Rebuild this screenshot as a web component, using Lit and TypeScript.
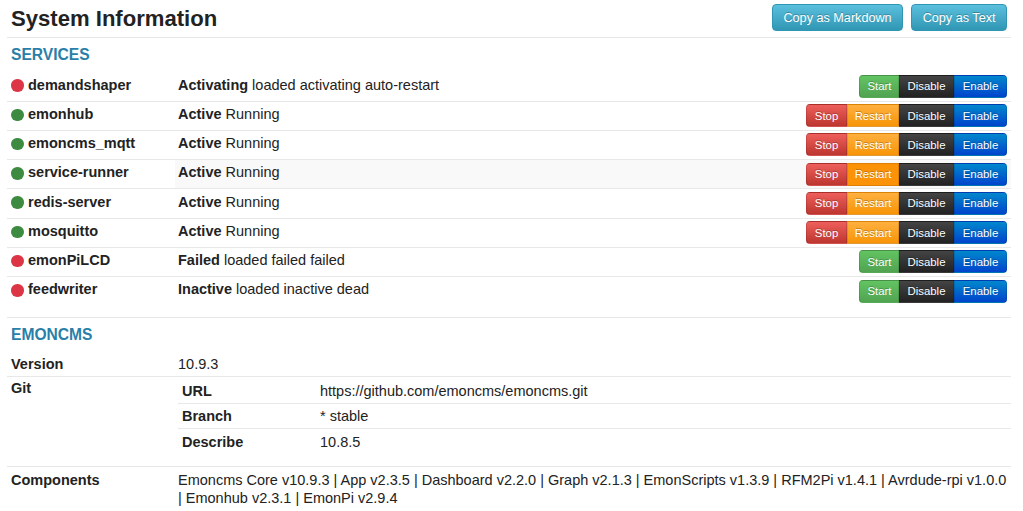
import { LitElement, html, css } from "lit";
import { customElement } from "lit/decorators.js";

type Svc = { name: string; ok: boolean; state: string; detail: string; hover?: boolean };

const services: Svc[] = [
  { name: "demandshaper", ok: false, state: "Activating", detail: "loaded activating auto-restart" },
  { name: "emonhub", ok: true, state: "Active", detail: "Running" },
  { name: "emoncms_mqtt", ok: true, state: "Active", detail: "Running" },
  { name: "service-runner", ok: true, state: "Active", detail: "Running", hover: true },
  { name: "redis-server", ok: true, state: "Active", detail: "Running" },
  { name: "mosquitto", ok: true, state: "Active", detail: "Running" },
  { name: "emonPiLCD", ok: false, state: "Failed", detail: "loaded failed failed" },
  { name: "feedwriter", ok: false, state: "Inactive", detail: "loaded inactive dead" },
];

@customElement("app-root")
export class AppRoot extends LitElement {
  static styles = css`
    :host {
      display: block;
      width: 1023px;
      height: 511px;
      overflow: hidden;
      background: #fff;
      color: #222;
      font-family: "Liberation Sans", Arial, sans-serif;
      font-size: 14.5px;
      box-sizing: border-box;
      padding: 0 12px 0 7px;
    }
    .head {
      display: flex;
      justify-content: space-between;
      height: 33px;
      border-bottom: 1px solid #e8e8e8;
      padding: 4px 4px 0 4px;
    }
    h1 {
      margin: 0;
      font-size: 22.1px;
      line-height: 30px;
      font-weight: bold;
      color: #222;
    }
    .copy {
      display: flex;
      gap: 8px;
      align-self: flex-start;
    }
    .copy button {
      height: 27px;
      padding: 0 10.5px;
      border: 1px solid #2f96b4;
      border-radius: 4px;
      background: linear-gradient(#5bc0de, #2f96b4);
      color: #fff;
      font: 12.65px "Liberation Sans", Arial, sans-serif;
      text-shadow: 0 -1px 0 rgba(0, 0, 0, 0.25);
    }
    h2 {
      margin: 0;
      padding-left: 4px;
      font-size: 15.6px;
      font-weight: bold;
      color: #2a7fa8;
      line-height: 20px;
    }
    .services-title { padding-top: 7px; height: 27.35px; }
    .row {
      display: grid;
      grid-template-columns: 168px 1fr auto;
      height: 28.25px;
      border-bottom: 1px solid #e8e8e8;
    }
    .row:last-child { border-bottom: none; }
    .name {
      display: flex;
      align-items: center;
      gap: 4.5px;
      padding: 0 0 3.7px 4px;
      font-weight: bold;
      line-height: 20px;
    }
    .dot {
      width: 12.5px;
      height: 12.5px;
      border-radius: 50%;
      flex: none;
      position: relative;
      top: 1px;
    }
    .dot.ok { background: #3d8b40; }
    .dot.bad { background: #dc3545; }
    .status {
      display: flex;
      align-items: center;
      padding: 0 0 3.7px 3px;
      gap: 4px;
      grid-column: 2 / 4;
      grid-row: 1;
    }
    .status.hover { background: #f9f9f9; }
    .btns {
      grid-column: 3;
      grid-row: 1;
      display: flex;
      align-self: center;
      margin-right: 4px;
      height: 23px;
    }
    .btns span {
      display: flex;
      align-items: center;
      justify-content: center;
      box-sizing: border-box;
      height: 23px;
      font-size: 11.4px;
      color: #fff;
      text-shadow: 0 -1px 0 rgba(0, 0, 0, 0.25);
      border: 1px solid rgba(0, 0, 0, 0.12);
    }
    .btns span:first-child { border-radius: 4px 0 0 4px; }
    .btns span:last-child { border-radius: 0 4px 4px 0; }
    .stop { width: 41px; background: linear-gradient(#ee5f5b, #bd362f); }
    .restart { width: 52px; background: linear-gradient(#ffb040, #f89406); }
    .restart.pressed { background: #fb9208; }
    .disable { width: 55px; background: linear-gradient(#444, #222); }
    .enable { width: 53px; background: linear-gradient(#0088cc, #0044cc); }
    .start { width: 40px; padding-left: 1px; background: linear-gradient(#62c462, #51a351); }
    .services { height: 244.65px; }
    .sep { border-bottom: 1px solid #e8e8e8; height: 0; }
    .em-title { padding-top: 7px; height: 20px; }
    .gap { height: 5px; }
    .kv {
      display: grid;
      grid-template-columns: 168px 1fr;
      border-bottom: 1px solid #e8e8e8;
      line-height: 20px;
    }
    .kv .k { font-weight: bold; padding-left: 4px; }
    .kv .v { padding-left: 3px; }
    .version { padding-top: 4px; height: 22px; }
    .git { height: 89px; }
    .git .k { padding-top: 1px; }
    .git .v { padding-top: 2px; }
    .sub {
      display: grid;
      grid-template-columns: 142px 1fr;
      box-sizing: border-box;
      height: 25px;
      padding-top: 1px;
      align-items: center;
      border-bottom: 1px solid #e8e8e8;
    }
    .sub:last-child { border-bottom: none; }
    .sub b { padding-left: 4px; }
    .comp { border-bottom: none; padding-top: 3px; line-height: 18px; }
    .comp .k { line-height: 20px; }
    .comp .v { padding-top: 1px; }
  `;

  private buttons(s: Svc) {
    return html`<div class="btns">
      ${s.ok
        ? html`<span class="stop">Stop</span><span class="restart ${s.hover ? "pressed" : ""}">Restart</span>`
        : html`<span class="start">Start</span>`}
      <span class="disable">Disable</span><span class="enable">Enable</span>
    </div>`;
  }

  render() {
    return html`
      <div class="head">
        <h1>System Information</h1>
        <div class="copy">
          <button>Copy as Markdown</button>
          <button>Copy as Text</button>
        </div>
      </div>
      <h2 class="services-title">SERVICES</h2>
      <div class="services">
        ${services.map(
          (s) => html`<div class="row">
            <div class="name"><i class="dot ${s.ok ? "ok" : "bad"}"></i>${s.name}</div>
            <div class="status ${s.hover ? "hover" : ""}"><b>${s.state}</b> ${s.detail}</div>
            ${this.buttons(s)}
          </div>`
        )}
      </div>
      <div class="sep"></div>
      <h2 class="em-title">EMONCMS</h2>
      <div class="gap"></div>
      <div class="kv version"><div class="k">Version</div><div class="v">10.9.3</div></div>
      <div class="kv git">
        <div class="k">Git</div>
        <div class="v">
          <div class="sub"><b>URL</b><span>https://github.com/emoncms/emoncms.git</span></div>
          <div class="sub"><b>Branch</b><span>* stable</span></div>
          <div class="sub"><b>Describe</b><span>10.8.5</span></div>
        </div>
      </div>
      <div class="kv comp">
        <div class="k">Components</div>
        <div class="v">Emoncms Core v10.9.3 | App v2.3.5 | Dashboard v2.2.0 | Graph v2.1.3 | EmonScripts v1.3.9 | RFM2Pi v1.4.1 | Avrdude-rpi v1.0.0 | Emonhub v2.3.1 | EmonPi v2.9.4</div>
      </div>
    `;
  }
}
